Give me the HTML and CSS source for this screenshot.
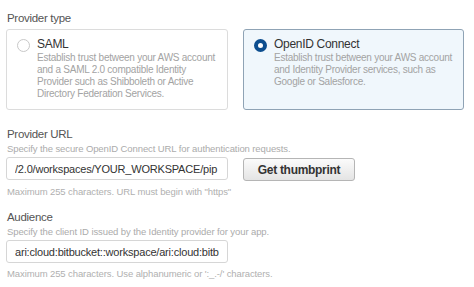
FILE: index.html
```html
<!DOCTYPE html>
<html lang="en">
<head>
  <meta charset="UTF-8" />
  <title>Add an Identity provider</title>
  <link rel="stylesheet" href="styles.css">
</head>
<body>

  <div class="panel">
    <div class="field-label first">Provider type</div>
    <div class="choices">
      <label class="choice">
        <span class="radio"></span>
        <span class="choice-text">
          <span class="choice-title">SAML</span>
          <span class="choice-desc">Establish trust between your AWS account and a SAML 2.0 compatible Identity Provider such as Shibboleth or Active Directory Federation Services.</span>
        </span>
      </label>
      <label class="choice selected">
        <span class="radio"></span>
        <span class="choice-text">
          <span class="choice-title">OpenID Connect</span>
          <span class="choice-desc">Establish trust between your AWS account and Identity Provider services, such as Google or Salesforce.</span>
        </span>
      </label>
    </div>

    <div class="field-label url-label">Provider URL</div>
    <div class="help">Specify the secure OpenID Connect URL for authentication requests.</div>
    <div class="input-row">
      <input type="text" value="/2.0/workspaces/YOUR_WORKSPACE/pip" readonly />
      <button type="button">Get thumbprint</button>
    </div>
    <div class="hint">Maximum 255 characters. URL must begin with "https"</div>

    <div class="field-label">Audience</div>
    <div class="help">Specify the client ID issued by the Identity provider for your app.</div>
    <div class="input-row">
      <input type="text" value="ari:cloud:bitbucket::workspace/ari:cloud:bitbucket" readonly />
    </div>
    <div class="hint">Maximum 255 characters. Use alphanumeric or ':_.-/' characters.</div>
  </div>

</body>
</html>
```

FILE: styles.css
```css
body {
  margin: 0;
  background-color: #fff;
  font-family: "Liberation Sans", Arial, sans-serif;
}
.panel {
  width: 458px;
  padding: 11px 0 0 6px;
}
.field-label {
  font-size: 11.5px;
  letter-spacing: -0.3px;
  line-height: 14px;
  color: #545454;
  padding-left: 1px;
  margin-top: 12px;
}
.field-label.first {
  margin-top: 0;
}
.field-label.url-label {
  margin-top: 17px;
}
.choices {
  display: grid;
  grid-template-columns: 222px 221px;
  column-gap: 15px;
  margin-top: 4px;
}
.choice {
  display: flex;
  align-items: flex-start;
  height: 81px;
  box-sizing: border-box;
  padding: 8px 4px 0 10px;
  border: 1px solid #dcdcdc;
  border-radius: 3px;
  background-color: #fff;
}
.choice.selected {
  background-color: #f0f7fc;
  border-color: #8fa3b5;
}
.radio {
  flex: none;
  width: 13px;
  height: 13px;
  box-sizing: border-box;
  margin: 1px 7px 0 0;
  border: 1px solid #c8c8c8;
  border-radius: 50%;
  background-color: #fff;
}
.selected .radio {
  border: 4px solid #0d4e8f;
}
.choice-text {
  display: flex;
  flex-direction: column;
  max-width: 180px;
}
.choice-title {
  font-size: 12px;
  letter-spacing: -0.3px;
  line-height: 16px;
  color: #333;
  margin-top: -2px;
}
.choice-desc {
  font-size: 10px;
  letter-spacing: -0.25px;
  line-height: 12px;
  color: #a3a3a3;
}
.help {
  font-size: 9.5px;
  letter-spacing: -0.1px;
  line-height: 12px;
  color: #ababab;
  padding-left: 1px;
  margin-top: 2px;
  white-space: nowrap;
}
.input-row {
  display: grid;
  grid-template-columns: 222px 221px;
  column-gap: 15px;
  margin-top: 2px;
}
input {
  width: 100%;
  height: 23px;
  box-sizing: border-box;
  padding: 0 8px;
  border: 1px solid #d6d6d6;
  border-radius: 3px;
  font-family: "Liberation Sans", Arial, sans-serif;
  font-size: 11px;
  letter-spacing: -0.2px;
  color: #333;
  outline: none;
}
button {
  justify-self: start;
  width: 112px;
  height: 23px;
  margin-top: 1px;
  padding: 0;
  border: 1px solid #b5b5b5;
  border-radius: 3px;
  background: linear-gradient(#fbfbfb, #e4e4e4);
  font-family: "Liberation Sans", Arial, sans-serif;
  font-size: 12px;
  letter-spacing: -0.3px;
  font-weight: bold;
  color: #333;
  cursor: pointer;
}
.hint {
  font-size: 9.5px;
  letter-spacing: -0.1px;
  line-height: 12px;
  color: #b0b0b0;
  padding-left: 1px;
  margin-top: 5px;
}
```
